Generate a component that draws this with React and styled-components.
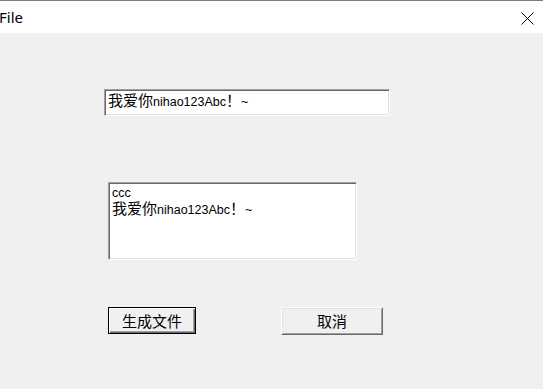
import React from 'react'
import styled, { createGlobalStyle } from 'styled-components'

const GlobalStyle = createGlobalStyle`
  html, body {
    margin: 0;
    padding: 0;
    background: #f0f0f0;
    overflow: hidden;
  }
`

const Window = styled.div`
  width: 543px;
  height: 389px;
  display: flex;
  flex-direction: column;
  background: #f0f0f0;
`

const TitleBar = styled.div`
  height: 32px;
  flex: none;
  border-top: 1px solid #7a7a7a;
  background: #ffffff;
  display: flex;
  align-items: center;
  justify-content: space-between;
  padding-right: 9px;
`

const Title = styled.span`
  margin-left: -1px;
  font-family: "Noto Sans", "Open Sans", sans-serif;
  font-size: 15px;
  color: #000;
`

const CloseBtn = styled.div`
  width: 13px;
  height: 13px;
  display: flex;
  margin-top: 3px;
`

const Body = styled.div`
  flex: 1;
  display: flex;
  flex-direction: column;
  align-items: flex-start;
  padding-top: 56px;
`

const Sunken = styled.div`
  box-sizing: border-box;
  margin-left: ${p => p.$left}px;
  margin-top: ${p => p.$top || 0}px;
  width: ${p => p.$w}px;
  height: ${p => p.$h}px;
  background: #ffffff;
  border: 1px solid;
  border-color: #a0a0a0 #ffffff #ffffff #a0a0a0;
  box-shadow: inset 1px 1px 0 #696969, inset -1px -1px 0 #e3e3e3;
  padding: 1px 3px 0 3px;
  overflow: hidden;
  color: #000;
`

const Line = styled.div`
  white-space: nowrap;
  line-height: ${p => p.$lh}px;
  font-family: "Noto Sans CJK SC", sans-serif;
  font-size: 15px;
`

const Latin = styled.span`
  font-family: "Liberation Sans", Arial, sans-serif;
  font-size: 12.5px;
`

const ButtonRow = styled.div`
  display: flex;
  align-items: flex-start;
  gap: 85px;
  margin-top: 47px;
  margin-left: 108px;
`

const Button = styled.div`
  box-sizing: border-box;
  width: ${p => p.$w}px;
  height: ${p => p.$h}px;
  display: flex;
  align-items: center;
  justify-content: center;
  background: #f0f0f0;
  font-family: "Noto Sans CJK SC", sans-serif;
  font-size: 15px;
  color: #000;
  border: 1px solid;
  border-color: ${p => p.$default ? '#000' : '#ffffff #696969 #696969 #ffffff'};
  box-shadow: ${p => p.$default
    ? 'inset 1px 1px 0 #ffffff, inset -1px -1px 0 #696969, inset -2px -2px 0 #a0a0a0'
    : 'inset 1px 1px 0 #e3e3e3, inset -1px -1px 0 #a0a0a0'};
  padding-bottom: 1px;
`

const TEXT = (
  <>
    我爱你<Latin>nihao123Abc</Latin>！<Latin>~</Latin>
  </>
)

export default function App() {
  return (
    <>
      <GlobalStyle />
      <Window>
        <TitleBar>
          <Title>File</Title>
          <CloseBtn>
            <svg width="13" height="13" viewBox="0 0 13 13">
              <path d="M0.5 0.5 L12.5 12.5 M12.5 0.5 L0.5 12.5" stroke="#000" strokeWidth="1" fill="none" />
            </svg>
          </CloseBtn>
        </TitleBar>
        <Body>
          <Sunken $left={104} $w={286} $h={27}>
            <Line $lh={17}>{TEXT}</Line>
          </Sunken>
          <Sunken $left={108} $top={66} $w={249} $h={78}>
            <Line $lh={14}><Latin>ccc</Latin></Line>
            <Line $lh={15}>{TEXT}</Line>
          </Sunken>
          <ButtonRow>
            <Button $default $w={88} $h={27}>生成文件</Button>
            <Button $w={102} $h={28}>取消</Button>
          </ButtonRow>
        </Body>
      </Window>
    </>
  )
}
